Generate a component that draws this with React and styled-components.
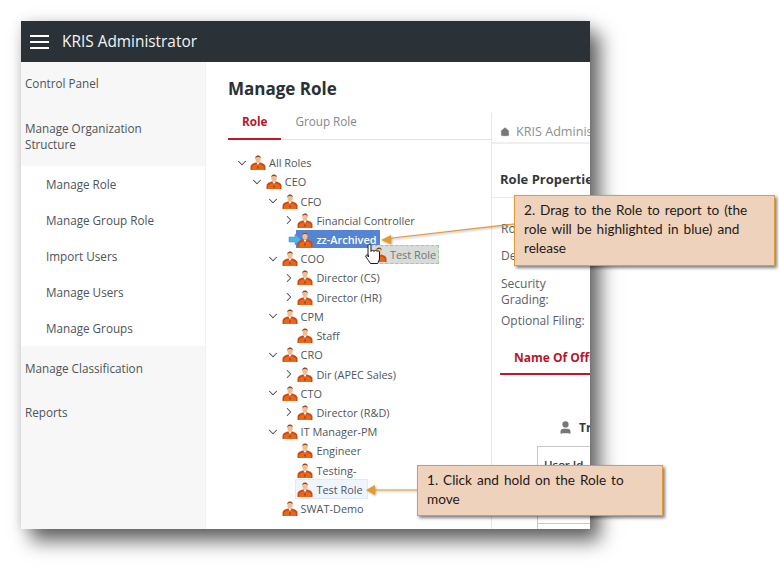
import React from 'react'
import styled, { createGlobalStyle } from 'styled-components'
import { ChevronDown, ChevronRight, Home, User } from 'lucide-react'

const GlobalStyle = createGlobalStyle`
  html, body {
    margin: 0;
    padding: 0;
    background: #fff;
  }
  * {
    box-sizing: border-box;
  }
`

const Page = styled.div`
  position: relative;
  width: 779px;
  height: 571px;
  padding: 21px 0 0 21px;
  overflow: hidden;
  font-family: 'Open Sans', 'Noto Sans', sans-serif;
`

const Window = styled.div`
  width: 569px;
  height: 508px;
  display: flex;
  flex-direction: column;
  overflow: hidden;
  background: #fff;
  box-shadow: 10px 12px 18px rgba(0, 0, 0, 0.6), 0 0 12px rgba(0, 0, 0, 0.12);
`

const Header = styled.header`
  flex: none;
  height: 41px;
  display: flex;
  align-items: center;
  gap: 13px;
  padding-left: 9px;
  background: #2a3238;
  color: #f4f4f4;
  font-size: 15.4px;
`

const Burger = styled.div`
  width: 19px;
  height: 14px;
  display: flex;
  flex-direction: column;
  justify-content: space-between;

  span {
    height: 2px;
    background: #fff;
  }
`

const Body = styled.div`
  flex: 1;
  min-height: 0;
  display: flex;
`

const Sidebar = styled.nav`
  flex: none;
  width: 185px;
  background: #f7f7f7;
  border-right: 1px solid #f1f1f1;
  color: #4d5358;
  font-size: 11.7px;
  line-height: 16px;
`

const NavItem = styled.div`
  padding: 14px 12px 14px 4px;

  &:first-child {
    padding: 13px 12px 15px 4px;
  }
`

const SubNav = styled.div`
  background: #fff;
`

const SubItem = styled.div`
  height: 36px;
  display: flex;
  align-items: center;
  padding-left: 25px;
`

const Content = styled.main`
  flex: 1;
  min-width: 0;
  display: flex;
  flex-direction: column;
  padding-left: 22px;
`

const Title = styled.h1`
  margin: 17px 0 0;
  height: 34px;
  color: #2a3035;
  font-size: 17px;
  line-height: 20px;
  font-weight: 700;
`

const Columns = styled.div`
  flex: 1;
  min-height: 0;
  display: flex;
`

const TreePanel = styled.section`
  flex: none;
  width: 263px;
`

const Tabs = styled.div`
  height: 27px;
  display: flex;
  border-bottom: 1px solid #e2e2e2;
  font-size: 11.7px;
`

const Tab = styled.div`
  height: 27px;
  padding: 0 14px;
  line-height: 17px;
  color: ${(p) => (p.$active ? '#b9152a' : '#83888c')};
  font-weight: ${(p) => (p.$active ? 700 : 400)};
  border-bottom: ${(p) => (p.$active ? '2px solid #c3162c' : 'none')};
`

const Tree = styled.div`
  padding-top: 13px;
  color: #50565b;
  font-size: 10.9px;
`

const Row = styled.div`
  height: 19.22px;
  display: flex;
  align-items: center;
  padding-left: ${(p) => p.$depth * 15.8 + 6}px;
`

const Toggle = styled.span`
  flex: none;
  width: 15px;
  height: 15px;
  display: flex;
  align-items: center;
  justify-content: center;
  color: #454a4e;
`

const RoleLabel = styled.span`
  display: flex;
  align-items: center;
  gap: 3px;
  height: 18px;
  padding: 0 4px 0 1px;
  white-space: nowrap;
  background: ${(p) => (p.$state === 'target' ? '#5683d2' : p.$state === 'source' ? '#eef5fc' : 'transparent')};
  color: ${(p) => (p.$state === 'target' ? '#fff' : 'inherit')};
  font-weight: ${(p) => (p.$state === 'target' ? 600 : 400)};
  outline: ${(p) => (p.$state === 'source' ? '1px solid #e0ebf6' : 'none')};
`

const DetailPanel = styled.section`
  flex: 1;
  min-width: 0;
  overflow: hidden;
  border-left: 1px solid #e6e6e6;
  color: #5b6065;
  font-size: 12px;
  white-space: nowrap;

  svg {
    flex: none;
  }
`

const Crumb = styled.div`
  height: 31px;
  display: flex;
  align-items: center;
  gap: 6px;
  padding: 8px 0 0 8px;
  border-bottom: 2px solid #efefef;
  color: #8b8f92;
  font-size: 12.6px;
`

const PanelHead = styled.div`
  height: 54px;
  padding: 27px 0 0 8px;
  border-bottom: 1px solid #e8e8e8;
  color: #33383c;
  font-weight: 700;
  font-size: 13px;
  line-height: 16px;
`

const Fields = styled.div`
  padding: 23px 0 0 9px;
`

const Field = styled.div`
  height: ${(p) => p.$height}px;
  line-height: 16px;
`

const OfficeTab = styled.div`
  height: 25px;
  margin: 21px 0 0 8px;
  padding-left: 14px;
  border-bottom: 2px solid #c3162c;
  color: #b9152a;
  font-weight: 700;
  line-height: 16px;
`

const Trustee = styled.div`
  display: flex;
  align-items: center;
  gap: 6px;
  margin: 44px 0 0 66px;
  color: #33383c;
  font-weight: 700;
`

const UserTable = styled.div`
  margin: 10px 0 0 45px;
  border: 1px solid #c8c8c8;
  border-right: none;
  color: #33383c;
  font-weight: 600;
  font-size: 11.5px;
`

const TableHead = styled.div`
  height: 77px;
  padding: 10px 0 0 6px;
  border-bottom: 1px solid #c8c8c8;
`

const TableRow = styled.div`
  height: 20px;
`

const Callout = styled.div`
  position: absolute;
  left: ${(p) => p.$left}px;
  top: ${(p) => p.$top}px;
  width: ${(p) => p.$width}px;
  height: ${(p) => p.$height}px;
  padding: 5px 9px 0 9px;
  background: #efd2bc;
  border: 1px solid #e29a33;
  box-shadow: 2px 2px 3px rgba(0, 0, 0, 0.5);
  color: #1d1a17;
  font-family: 'Lato', 'Open Sans', sans-serif;
  font-size: 13.6px;
  line-height: 19px;
  word-spacing: 1.5px;
`

const Overlay = styled.svg`
  position: absolute;
  left: 0;
  top: 0;
  pointer-events: none;
`

const Connector = styled.g`
  filter: drop-shadow(1px 1px 1px rgba(0, 0, 0, 0.35));
`

const Ghost = styled.div`
  position: absolute;
  left: 370px;
  top: 245px;
  width: 69px;
  height: 19px;
  display: flex;
  align-items: center;
  gap: 3px;
  background: #d7dcd8;
  border: 1px dashed #93cf9f;
  color: #71757a;
  font-size: 10.9px;
  white-space: nowrap;
`

const RoleIcon = () => (
  <svg width="16" height="15" viewBox="0 0 16 15" style={{ flex: 'none' }}>
    <path d="M.5 15v-3C.5 9.500 3 8.300 5.800 7.500h4.400C13 8.300 15.500 9.500 15.500 12v3z" fill="#cf4a10" />
    <path d="M2 15v-2.600c0-1.400 1.800-2.400 4-3h4c2.200.6 4 1.600 4 3V15z" fill="#e8681a" />
    <path d="M6.600 7.500 8 12l1.400-4.500z" fill="#fff" />
    <path d="M7.600 9h.8l.4 3.500-.8 2-.8-2z" fill="#b93a18" />
    <ellipse cx="8" cy="3.900" rx="2.600" ry="3.400" fill="#f2bd94" />
    <path d="M5.200 3.600C5.100 1.300 6.400.4 8 .4s2.900.9 2.800 3.200C10.200 2.400 9 2 8 2s-2.200.4-2.800 1.600z" fill="#8a4a22" />
  </svg>
)

const tree = [
  { name: 'All Roles', depth: 0, open: true },
  { name: 'CEO', depth: 1, open: true },
  { name: 'CFO', depth: 2, open: true },
  { name: 'Financial Controller', depth: 3, open: false },
  { name: 'zz-Archived', depth: 3, state: 'target' },
  { name: 'COO', depth: 2, open: true },
  { name: 'Director (CS)', depth: 3, open: false },
  { name: 'Director (HR)', depth: 3, open: false },
  { name: 'CPM', depth: 2, open: true },
  { name: 'Staff', depth: 3 },
  { name: 'CRO', depth: 2, open: true },
  { name: 'Dir (APEC Sales)', depth: 3, open: false },
  { name: 'CTO', depth: 2, open: true },
  { name: 'Director (R&D)', depth: 3, open: false },
  { name: 'IT Manager-PM', depth: 2, open: true },
  { name: 'Engineer', depth: 3 },
  { name: 'Testing-', depth: 3 },
  { name: 'Test Role', depth: 3, state: 'source' },
  { name: 'SWAT-Demo', depth: 2 },
]

const subNav = ['Manage Role', 'Manage Group Role', 'Import Users', 'Manage Users', 'Manage Groups']

export default function App() {
  return (
    <Page>
      <GlobalStyle />
      <Window>
        <Header>
          <Burger>
            <span />
            <span />
            <span />
          </Burger>
          KRIS Administrator
        </Header>
        <Body>
          <Sidebar>
            <NavItem>Control Panel</NavItem>
            <NavItem>
              Manage Organization
              <br />
              Structure
            </NavItem>
            <SubNav>
              {subNav.map((item) => (
                <SubItem key={item}>{item}</SubItem>
              ))}
            </SubNav>
            <NavItem>Manage Classification</NavItem>
            <NavItem>Reports</NavItem>
          </Sidebar>
          <Content>
            <Title>Manage Role</Title>
            <Columns>
              <TreePanel>
                <Tabs>
                  <Tab $active>Role</Tab>
                  <Tab>Group Role</Tab>
                </Tabs>
                <Tree>
                  {tree.map((role) => (
                    <Row key={role.name} $depth={role.depth}>
                      <Toggle>
                        {role.open === true && <ChevronDown size={14} strokeWidth={1.800} />}
                        {role.open === false && <ChevronRight size={14} strokeWidth={1.800} />}
                      </Toggle>
                      <RoleLabel $state={role.state}>
                        <RoleIcon />
                        {role.name}
                      </RoleLabel>
                    </Row>
                  ))}
                </Tree>
              </TreePanel>
              <DetailPanel>
                <Crumb>
                  <Home size={10} fill="#777" strokeWidth={1} />
                  KRIS Administrator
                </Crumb>
                <PanelHead>Role Properties</PanelHead>
                <Fields>
                  <Field $height={27}>Role:</Field>
                  <Field $height={28}>Description:</Field>
                  <Field $height={37}>
                    Security
                    <br />
                    Grading:
                  </Field>
                  <Field $height={16}>Optional Filing:</Field>
                </Fields>
                <OfficeTab>Name Of Office</OfficeTab>
                <Trustee>
                  <User size={15} fill="#777" color="#777" />
                  Trustee
                </Trustee>
                <UserTable>
                  <TableHead>User Id</TableHead>
                  <TableRow />
                </UserTable>
              </DetailPanel>
            </Columns>
          </Content>
        </Body>
      </Window>

      <Ghost>
        <RoleIcon />
        Test Role
      </Ghost>

      <Overlay width="779" height="571" viewBox="0 0 779 571">
        <Connector>
          <path d="M514 224 388 238.500" stroke="#e29a33" strokeWidth="1.200" fill="none" />
          <path d="M381 240 391 235v9z" fill="#e29a33" />
          <path d="M417 490H372" stroke="#e29a33" strokeWidth="1.200" fill="none" />
          <path d="M366 490 375 485v10z" fill="#e29a33" />
        </Connector>
        <path d="M289 237h6v-3l6 5.500-6 5.500v-3h-6z" fill="#4fb3ea" stroke="#2f8fd0" strokeWidth=".5" />
        <path
          d="M368 257v-11c0-2 3-2 3 0v5.500c0-1.500 3-1.500 3 0 0-1.500 3-1.500 3 0 0-1 2.500-1 2.500.5v5c0 3-1 5-2 6.500h-7c-1-2-3-4-4.500-6.500-1-2 1.500-3 3-1z"
          fill="#fff"
          stroke="#1a1a1a"
          strokeWidth="1"
        />
      </Overlay>

      <Callout $left={514} $top={195} $width={261} $height={71}>
        2. Drag to the Role to report to (the role will be highlighted in blue) and release
      </Callout>
      <Callout $left={417} $top={465} $width={246} $height={51}>
        1. Click and hold on the Role to move
      </Callout>
    </Page>
  )
}
